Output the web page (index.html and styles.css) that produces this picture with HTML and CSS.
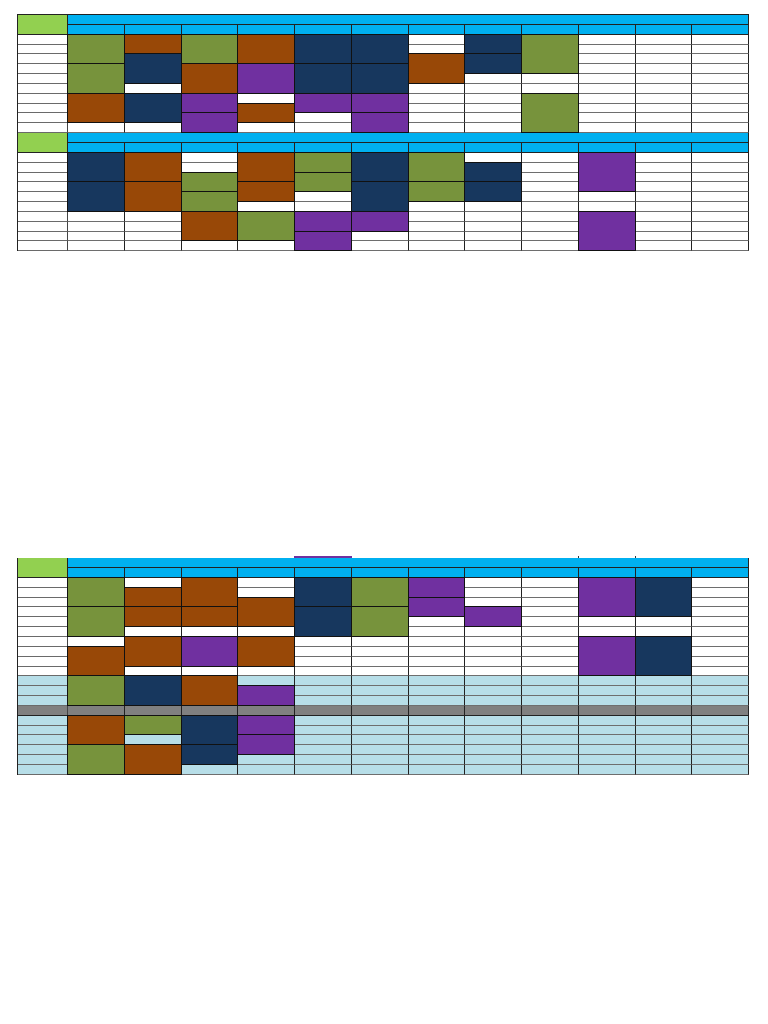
FILE: index.html
```html
<!DOCTYPE html>
<html>
<head>
<meta charset="utf-8">
<link rel="stylesheet" href="styles.css">
</head>
<body>
<div class="sheet">
  <div class="tbl first" data-set="0"></div>
  <div class="tbl" data-set="1"></div>
  <div class="lip">
    <div class="sliver"></div>
    <div class="tick t1"></div>
    <div class="tick t2"></div>
  </div>
  <div class="tbl" data-set="2"></div>
</div>
<script src="app.js"></script>
</body>
</html>
```

FILE: styles.css
```css
html, body { margin: 0; padding: 0; background: #fff; }
body { padding: 14px 0 0 17px; font-family: "Liberation Sans", Arial, sans-serif; }
.sheet { width: 732px; }
.tbl {
  display: grid;
  grid-template-columns: 50px repeat(12, 1fr);
  grid-auto-rows: 9.85px;
  width: 732px;
  box-sizing: border-box;
  border-left: 1px solid #222;
}
.tbl.first { border-top: 1px solid #222; }
.cell {
  background: #fff;
  border-right: 1px solid #222;
  border-bottom: 1px solid #6e6e6e;
}
.cell.lab { border-bottom-color: #6a6a6a; border-right-color: #444; }
.cell.lb { background: #b7dee8; }
.cell.gr { background: #808080; border-bottom-color: #222; }
.corner {
  background: #92d050;
  border-right: 1px solid #222;
  border-bottom: 1px solid #222;
}
.bar {
  background: #00b0f0;
  border-right: 1px solid #222;
  border-bottom: 1px solid #222;
}
.hd {
  background: #00b0f0;
  border-right: 1px solid #222;
  border-bottom: 1px solid #222;
}
.blk {
  margin: -1px 0 0 -1px;
  border: 1px solid #111;
}
.o { background: #77933c; }
.b { background: #984807; }
.n { background: #17375e; }
.p { background: #7030a0; }
.lip {
  display: grid;
  grid-template-columns: 50px repeat(12, 1fr);
  width: 732px;
  height: 2px;
  box-sizing: border-box;
  border-left: 1px solid transparent;
  margin-top: 305px;
}
.sliver {
  grid-column: 6;
  grid-row: 1;
  margin-left: -1px;
  background: #7030a0;
}
.tick { grid-row: 1; margin-left: -1px; border-left: 1px solid #333; }
.t1 { grid-column: 11; }
.t2 { grid-column: 12; }
```

FILE: app.js
```js
var SETS = [
  {
    rows: 10,
    blocks: [
      [1,1,3,'o'],[1,4,3,'o'],[1,7,3,'b'],
      [2,1,2,'b'],[2,3,3,'n'],[2,7,3,'n'],
      [3,1,3,'o'],[3,4,3,'b'],[3,7,2,'p'],[3,9,2,'p'],
      [4,1,3,'b'],[4,4,3,'p'],[4,8,2,'b'],
      [5,1,3,'n'],[5,4,3,'n'],[5,7,2,'p'],
      [6,1,3,'n'],[6,4,3,'n'],[6,7,2,'p'],[6,9,2,'p'],
      [7,3,3,'b'],
      [8,1,2,'n'],[8,3,2,'n'],
      [9,1,4,'o'],[9,7,4,'o']
    ]
  },
  {
    rows: 10,
    blocks: [
      [1,1,3,'n'],[1,4,3,'n'],
      [2,1,3,'b'],[2,4,3,'b'],
      [3,3,2,'o'],[3,5,2,'o'],[3,7,3,'b'],
      [4,1,3,'b'],[4,4,2,'b'],[4,7,3,'o'],
      [5,1,2,'o'],[5,3,2,'o'],[5,7,2,'p'],[5,9,2,'p'],
      [6,1,3,'n'],[6,4,3,'n'],[6,7,2,'p'],
      [7,1,3,'o'],[7,4,2,'o'],
      [8,2,2,'n'],[8,4,2,'n'],
      [10,1,4,'p'],[10,7,4,'p']
    ]
  },
  {
    rows: 20,
    rowType: function (r) { return r === 14 ? 'gr' : (r > 10 ? 'lb' : ''); },
    blocks: [
      [1,1,3,'o'],[1,4,3,'o'],[1,8,3,'b'],[1,11,3,'o'],[1,15,3,'b'],[1,18,3,'o'],
      [2,2,2,'b'],[2,4,2,'b'],[2,7,3,'b'],[2,11,3,'n'],[2,15,2,'o'],[2,18,3,'b'],
      [3,1,3,'b'],[3,4,2,'b'],[3,7,3,'p'],[3,11,3,'b'],[3,15,3,'n'],[3,18,2,'n'],
      [4,3,3,'b'],[4,7,3,'b'],[4,12,2,'p'],[4,15,2,'p'],[4,17,2,'p'],
      [5,1,3,'n'],[5,4,3,'n'],
      [6,1,3,'o'],[6,4,3,'o'],
      [7,1,2,'p'],[7,3,2,'p'],
      [8,4,2,'p'],
      [10,1,4,'p'],[10,7,4,'p'],
      [11,1,4,'n'],[11,7,4,'n']
    ]
  }
];

function el(cls, area) {
  var d = document.createElement('div');
  d.className = cls;
  d.style.gridArea = area;
  return d;
}

document.querySelectorAll('.tbl').forEach(function (tbl) {
  var set = SETS[+tbl.getAttribute('data-set')];
  var frag = document.createDocumentFragment();
  frag.appendChild(el('corner', '1 / 1 / 3 / 2'));
  frag.appendChild(el('bar', '1 / 2 / 2 / 14'));
  for (var c = 2; c <= 13; c++) {
    frag.appendChild(el('hd', '2 / ' + c + ' / 3 / ' + (c + 1)));
  }
  for (var r = 1; r <= set.rows; r++) {
    var t = set.rowType ? set.rowType(r) : '';
    for (var k = 1; k <= 13; k++) {
      var cls = 'cell' + (k === 1 ? ' lab' : '') + (t ? ' ' + t : '');
      frag.appendChild(el(cls, (r + 2) + ' / ' + k + ' / ' + (r + 3) + ' / ' + (k + 1)));
    }
  }
  set.blocks.forEach(function (b) {
    var col = b[0] + 1, row = b[1] + 2;
    frag.appendChild(el('blk ' + b[3], row + ' / ' + col + ' / ' + (row + b[2]) + ' / ' + (col + 1)));
  });
  tbl.appendChild(frag);
});
```
